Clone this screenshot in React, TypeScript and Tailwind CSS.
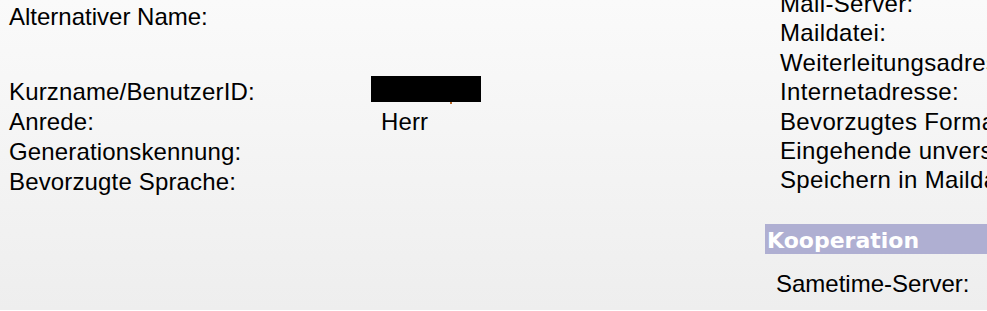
import React from "react";

const leftRows = [
  { label: "Kurzname/BenutzerID:", value: "redacted" },
  { label: "Anrede:", value: "Herr" },
  { label: "Generationskennung:", value: "" },
  { label: "Bevorzugte Sprache:", value: "" },
];

const rightRows = [
  "Mail-Server:",
  "Maildatei:",
  "Weiterleitungsadresse:",
  "Internetadresse:",
  "Bevorzugtes Format für eingehende Mail:",
  "Eingehende unverschlüsselte Mail verschlüsseln:",
  "Speichern in Maildatei:",
];

export default function App() {
  return (
    <div className="w-[987px] h-[311px] overflow-hidden flex flex-col bg-white">
      <div
        className="h-[310px] flex bg-linear-to-b from-[#fafafa] to-[#eeeeee] text-black text-[24px] leading-[30px] whitespace-nowrap"
        style={{ fontFamily: '"Liberation Sans", Arial, sans-serif' }}
      >
        {/* Left section */}
        <div className="w-[765px] shrink-0 pl-[9px] pt-[2px] flex flex-col">
          <div>Alternativer Name:</div>
          <div className="mt-[45px] flex flex-col tracking-[0.15px]">
            {leftRows.map((r) => (
              <div key={r.label} className="flex h-[30px]">
                <div className="w-[362px] shrink-0">{r.label}</div>
                <div className="flex-1">
                  {r.value === "redacted" ? (
                    <div className="flex flex-col">
                      <div className="w-[110px] h-[26px] mt-[-1px] bg-black" />
                      <div className="ml-[79px] w-[2px] h-[2px] bg-[#b8682a]" />
                    </div>
                  ) : (
                    <span className="pl-[10px]">{r.value}</span>
                  )}
                </div>
              </div>
            ))}
          </div>
        </div>

        {/* Right section */}
        <div className="flex-1 min-w-0 overflow-hidden flex flex-col">
          <div className="mt-[-11px] pl-[15px] flex flex-col leading-[29.4px] tracking-[0.35px]">
            {rightRows.map((r) => (
              <div key={r} className="h-[29.4px]">
                {r}
              </div>
            ))}
          </div>
          <div
            className="mt-[29px] h-[30px] bg-[#afafd2] pl-[2px] pt-[3px] text-white font-bold text-[22px] leading-[27px]"
            style={{ fontFamily: '"DejaVu Sans", Verdana, sans-serif' }}
          >
            Kooperation
          </div>
          <div className="mt-[15px] pl-[11px]">Sametime-Server:</div>
        </div>
      </div>
      <div className="h-[1px] bg-white" />
    </div>
  );
}
